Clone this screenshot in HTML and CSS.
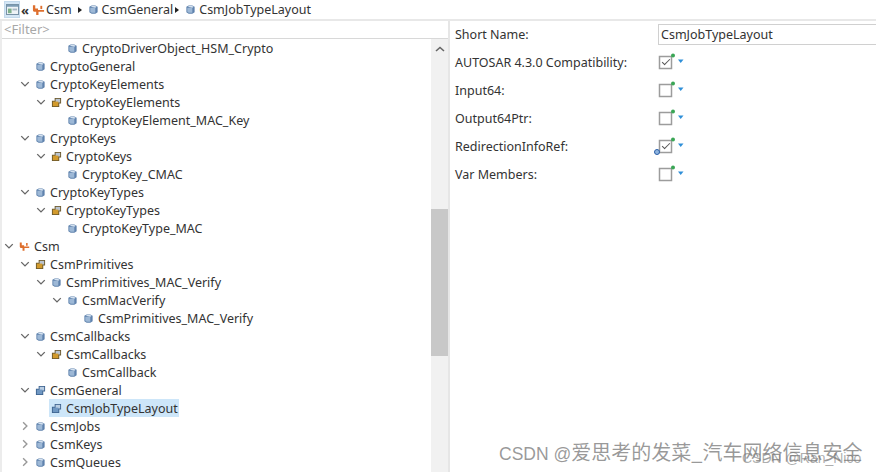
FILE: index.html
```html
<!DOCTYPE html>
<html lang="en">

<head>
    <meta charset="UTF-8">
    <title>CsmJobTypeLayout</title>
    <link rel="stylesheet" href="styles.css">
</head>

<body>
    <svg class="defs" width="0" height="0">
        <symbol id="cube" viewBox="-1 -1 12 12">
            <path d="M.5 2 3 .5h4L9.500 2v6L7 9.500H3L.5 8z" fill="#5f82ad"/>
            <path d="M1.500 3H7v5.500H3L1.500 7.500z" fill="#9db8d6"/>
            <path d="M2 2 3.500 1.200h3.200L8.500 2 7 3z" fill="#d5e2f0"/>
        </symbol>
        <symbol id="stack" viewBox="0 0 12 12">
            <path d="M4 1h7v6H9v4H1V4h3z" fill="#6d5a2c"/>
            <path d="M5 2h5v4H5z" fill="#b9c3cf"/>
            <path d="M2 5h6v5H2z" fill="#d29a2c"/>
        </symbol>
        <symbol id="stack-blue" viewBox="0 0 12 12">
            <path d="M4 1h7v6H9v4H1V4h3z" fill="#3f6490"/>
            <path d="M5 2h5v4H5z" fill="#b9cde2"/>
            <path d="M2 5h6v5H2z" fill="#6f97c2"/>
        </symbol>
        <symbol id="fork" viewBox="0 0 14 12">
            <path d="M1 1h2.500v3.500h3V6h6.500v2H7v3.500H4.500V8H3C1.500 8 1 7 1 6z" fill="#de6f2e"/>
            <path d="M9 1.500h2V5H9z" fill="#de6f2e"/>
        </symbol>
        <symbol id="open" viewBox="0 0 8 8">
            <path d="M1 2.500 4 5.500 7 2.500" fill="none" stroke="#666" stroke-width="1.100"/>
        </symbol>
        <symbol id="closed" viewBox="0 0 8 8">
            <path d="M2.500 1 5.500 4 2.500 7" fill="none" stroke="#999" stroke-width="1.100"/>
        </symbol>
        <symbol id="mark" viewBox="0 0 26 20">
            <rect x="1.500" y="5.500" width="12" height="12" fill="#fff" stroke="#9c9c9c" stroke-width="1.500"/>
            <circle cx="15" cy="4.500" r="2" fill="#3aa655"/>
            <path d="M20 8.500h5.500L22.700 12z" fill="#2f8fd8"/>
        </symbol>
    </svg>

    <div class="crumbs">
        <span class="view-btn">
            <svg width="13" height="11" viewBox="0 0 14 12"><rect x=".5" y=".5" width="13" height="11" fill="#eef3f7" stroke="#6f8aa0"/><rect x="1" y="1" width="12" height="2" fill="#7d9db5"/><rect x="2" y="5" width="4" height="5" fill="#7fb08c"/><rect x="7" y="5" width="5" height="2" fill="#a9b8c4"/></svg>
        </span>
        <span class="chev">«</span>
        <svg class="ico-fork"><use href="#fork"/></svg>
        <span>Csm</span>
        <span class="arrow"></span>
        <svg class="ico"><use href="#cube"/></svg>
        <span>CsmGeneral</span>
        <span class="arrow tight"></span>
        <svg class="ico"><use href="#cube"/></svg>
        <span>CsmJobTypeLayout</span>
    </div>

    <div class="main">
        <div class="left">
            <div class="filter">&lt;Filter&gt;</div>
            <div class="tree-wrap">
                <div class="tree">
                    <div class="row lv3"><i class="tw"></i><svg class="ico"><use href="#cube"/></svg><span>CryptoDriverObject_HSM_Crypto</span></div>
                    <div class="row lv1"><i class="tw"></i><svg class="ico"><use href="#cube"/></svg><span>CryptoGeneral</span></div>
                    <div class="row lv1"><svg class="tw"><use href="#open"/></svg><svg class="ico"><use href="#cube"/></svg><span>CryptoKeyElements</span></div>
                    <div class="row lv2"><svg class="tw"><use href="#open"/></svg><svg class="ico"><use href="#stack"/></svg><span>CryptoKeyElements</span></div>
                    <div class="row lv3"><i class="tw"></i><svg class="ico"><use href="#cube"/></svg><span>CryptoKeyElement_MAC_Key</span></div>
                    <div class="row lv1"><svg class="tw"><use href="#open"/></svg><svg class="ico"><use href="#cube"/></svg><span>CryptoKeys</span></div>
                    <div class="row lv2"><svg class="tw"><use href="#open"/></svg><svg class="ico"><use href="#stack"/></svg><span>CryptoKeys</span></div>
                    <div class="row lv3"><i class="tw"></i><svg class="ico"><use href="#cube"/></svg><span>CryptoKey_CMAC</span></div>
                    <div class="row lv1"><svg class="tw"><use href="#open"/></svg><svg class="ico"><use href="#cube"/></svg><span>CryptoKeyTypes</span></div>
                    <div class="row lv2"><svg class="tw"><use href="#open"/></svg><svg class="ico"><use href="#stack"/></svg><span>CryptoKeyTypes</span></div>
                    <div class="row lv3"><i class="tw"></i><svg class="ico"><use href="#cube"/></svg><span>CryptoKeyType_MAC</span></div>
                    <div class="row lv0"><svg class="tw"><use href="#open"/></svg><svg class="ico"><use href="#fork"/></svg><span>Csm</span></div>
                    <div class="row lv1"><svg class="tw"><use href="#open"/></svg><svg class="ico"><use href="#stack"/></svg><span>CsmPrimitives</span></div>
                    <div class="row lv2"><svg class="tw"><use href="#open"/></svg><svg class="ico"><use href="#cube"/></svg><span>CsmPrimitives_MAC_Verify</span></div>
                    <div class="row lv3"><svg class="tw"><use href="#open"/></svg><svg class="ico"><use href="#cube"/></svg><span>CsmMacVerify</span></div>
                    <div class="row lv4"><i class="tw"></i><svg class="ico"><use href="#cube"/></svg><span>CsmPrimitives_MAC_Verify</span></div>
                    <div class="row lv1"><svg class="tw"><use href="#open"/></svg><svg class="ico"><use href="#cube"/></svg><span>CsmCallbacks</span></div>
                    <div class="row lv2"><svg class="tw"><use href="#open"/></svg><svg class="ico"><use href="#stack"/></svg><span>CsmCallbacks</span></div>
                    <div class="row lv3"><i class="tw"></i><svg class="ico"><use href="#cube"/></svg><span>CsmCallback</span></div>
                    <div class="row lv1"><svg class="tw"><use href="#open"/></svg><svg class="ico"><use href="#stack-blue"/></svg><span>CsmGeneral</span></div>
                    <div class="row lv2"><i class="tw"></i><div class="selected"><svg class="ico"><use href="#stack-blue"/></svg><span>CsmJobTypeLayout</span></div></div>
                    <div class="row lv1"><svg class="tw"><use href="#closed"/></svg><svg class="ico"><use href="#cube"/></svg><span>CsmJobs</span></div>
                    <div class="row lv1"><svg class="tw"><use href="#closed"/></svg><svg class="ico"><use href="#cube"/></svg><span>CsmKeys</span></div>
                    <div class="row lv1"><svg class="tw"><use href="#closed"/></svg><svg class="ico"><use href="#cube"/></svg><span>CsmQueues</span></div>
                </div>
                <div class="scrollbar">
                    <svg class="up" width="10" height="6" viewBox="0 0 10 6"><path d="M1 5 5 1.500 9 5" fill="none" stroke="#666" stroke-width="1.600"/></svg>
                    <div class="thumb"></div>
                </div>
            </div>
        </div>

        <div class="right">
            <div class="field first">
                <label>Short Name:</label>
                <input class="name-input" type="text" value="CsmJobTypeLayout">
            </div>
            <div class="field">
                <label>AUTOSAR 4.3.0 Compatibility:</label>
                <span class="check on"><svg class="box"><use href="#mark"/></svg></span>
            </div>
            <div class="field">
                <label>Input64:</label>
                <span class="check"><svg class="box"><use href="#mark"/></svg></span>
            </div>
            <div class="field">
                <label>Output64Ptr:</label>
                <span class="check"><svg class="box"><use href="#mark"/></svg></span>
            </div>
            <div class="field">
                <label>RedirectionInfoRef:</label>
                <span class="check on ref"><svg class="box"><use href="#mark"/></svg></span>
            </div>
            <div class="field">
                <label>Var Members:</label>
                <span class="check"><svg class="box"><use href="#mark"/></svg></span>
            </div>
        </div>
    </div>

    <div class="watermark">CSDN @<span class="cjk">爱思考的发菜_汽车网络信息安全</span></div>
    <div class="watermark small">CSDN @Ran_Nico</div>
</body>

</html>
```

FILE: styles.css
```css
html, body {
    height: 100%;
}

body {
    font-family: "Noto Sans", "Noto Sans CJK SC", sans-serif;
    font-size: 12.500px;
    color: #333;
    margin: 0;
    width: 876px;
    height: 472px;
    overflow: hidden;
    background-color: #fff;
    display: flex;
    flex-direction: column;
    position: relative;
}

.defs {
    position: absolute;
}

.crumbs {
    height: 19px;
    display: flex;
    align-items: center;
    padding-left: 4px;
    flex: none;
}

.view-btn {
    width: 16px;
    height: 17px;
    background-color: #d4e6f5;
    border: 1px solid #c3d9ec;
    box-sizing: border-box;
    display: flex;
    align-items: center;
    justify-content: center;
}

.chev {
    font-size: 13px;
    font-weight: bold;
    margin-left: 1px;
    width: 8px;
    line-height: 14px;
}

.ico-fork {
    width: 13px;
    height: 12px;
    margin: 0 1px 0 3px;
}

.arrow {
    width: 0;
    height: 0;
    border-left: 4px solid #222;
    border-top: 3.500px solid transparent;
    border-bottom: 3.500px solid transparent;
    margin: 0 6px 0 6px;
}

.tight {
    margin-left: 2px;
}

.crumbs .ico {
    margin: 0 3px 0 0;
}

.main {
    flex: 1;
    display: flex;
    min-height: 0;
    border-top: 2px solid #e8e8e8;
}

.left {
    width: 446px;
    margin-left: 2px;
    border-right: 2px solid #e6e6e6;
    display: flex;
    flex-direction: column;
    flex: none;
    box-shadow: -2px 0 0 #ececec;
}

.filter {
    height: 17px;
    line-height: 17px;
    color: #a8a8a8;
    padding-left: 2px;
    border-bottom: 1px solid #d8d8d8;
    flex: none;
    font-size: 13px;
}

.tree-wrap {
    flex: 1;
    display: flex;
    min-height: 0;
}

.tree {
    flex: 1;
    overflow: hidden;
}

.row {
    height: 18px;
    display: flex;
    align-items: center;
    white-space: nowrap;
}

.lv0 { padding-left: 2px; }
.lv1 { padding-left: 18px; }
.lv2 { padding-left: 34px; }
.lv3 { padding-left: 50px; }
.lv4 { padding-left: 66px; }

.tw {
    width: 10px;
    height: 10px;
    flex: none;
}

.ico {
    width: 11px;
    height: 11px;
    flex: none;
    margin: 0 4px 0 5px;
}

.selected {
    display: flex;
    align-items: center;
    background-color: #cde6f9;
    height: 18px;
    padding-right: 1px;
    margin-left: 3px;
}

.selected .ico {
    margin-left: 2px;
}

.scrollbar {
    width: 17px;
    flex: none;
    background-color: #f1f1f1;
    display: flex;
    flex-direction: column;
    align-items: center;
}

.up {
    margin-top: 7px;
}

.thumb {
    width: 100%;
    height: 147px;
    margin-top: 157px;
    background-color: #c8c8c8;
}

.right {
    flex: 1;
    padding: 2px 0 0 5px;
}

.field {
    height: 28px;
    display: flex;
    align-items: center;
}

.field label {
    width: 203px;
    flex: none;
}

.first {
    height: 22px;
    margin-bottom: 3px;
}

.name-input {
    font: inherit;
    color: #333;
    border: 1px solid #d0d0d0;
    height: 21px;
    width: 240px;
    box-sizing: border-box;
    padding: 0 2px;
    outline: none;
}

.check {
    width: 26px;
    height: 20px;
    position: relative;
    display: block;
    margin-bottom: 2px;
}

.box {
    width: 26px;
    height: 20px;
    display: block;
}

.on::after {
    content: "";
    position: absolute;
    left: 4px;
    top: 8px;
    width: 7px;
    height: 3px;
    border-left: 1.300px solid #555;
    border-bottom: 1.300px solid #555;
    transform: rotate(-45deg);
}

.ref::before {
    content: "";
    position: absolute;
    left: -4px;
    top: 14px;
    width: 4px;
    height: 4px;
    border: 1px solid #2a5fa8;
    border-radius: 50%;
    background-color: #8fb4df;
}

.watermark {
    position: absolute;
    left: 499px;
    top: 440px;
    font-family: "Liberation Sans", "Noto Sans CJK SC", sans-serif;
    font-size: 17.500px;
    line-height: 24px;
    color: rgba(120, 120, 120, 0.75);
    white-space: nowrap;
}

.cjk {
    font-family: "Noto Sans CJK SC", sans-serif;
    font-size: 20px;
}

.small {
    left: 742px;
    top: 449px;
    font-size: 14px;
    line-height: 18px;
    color: rgba(120, 120, 120, 0.6);
}
```
